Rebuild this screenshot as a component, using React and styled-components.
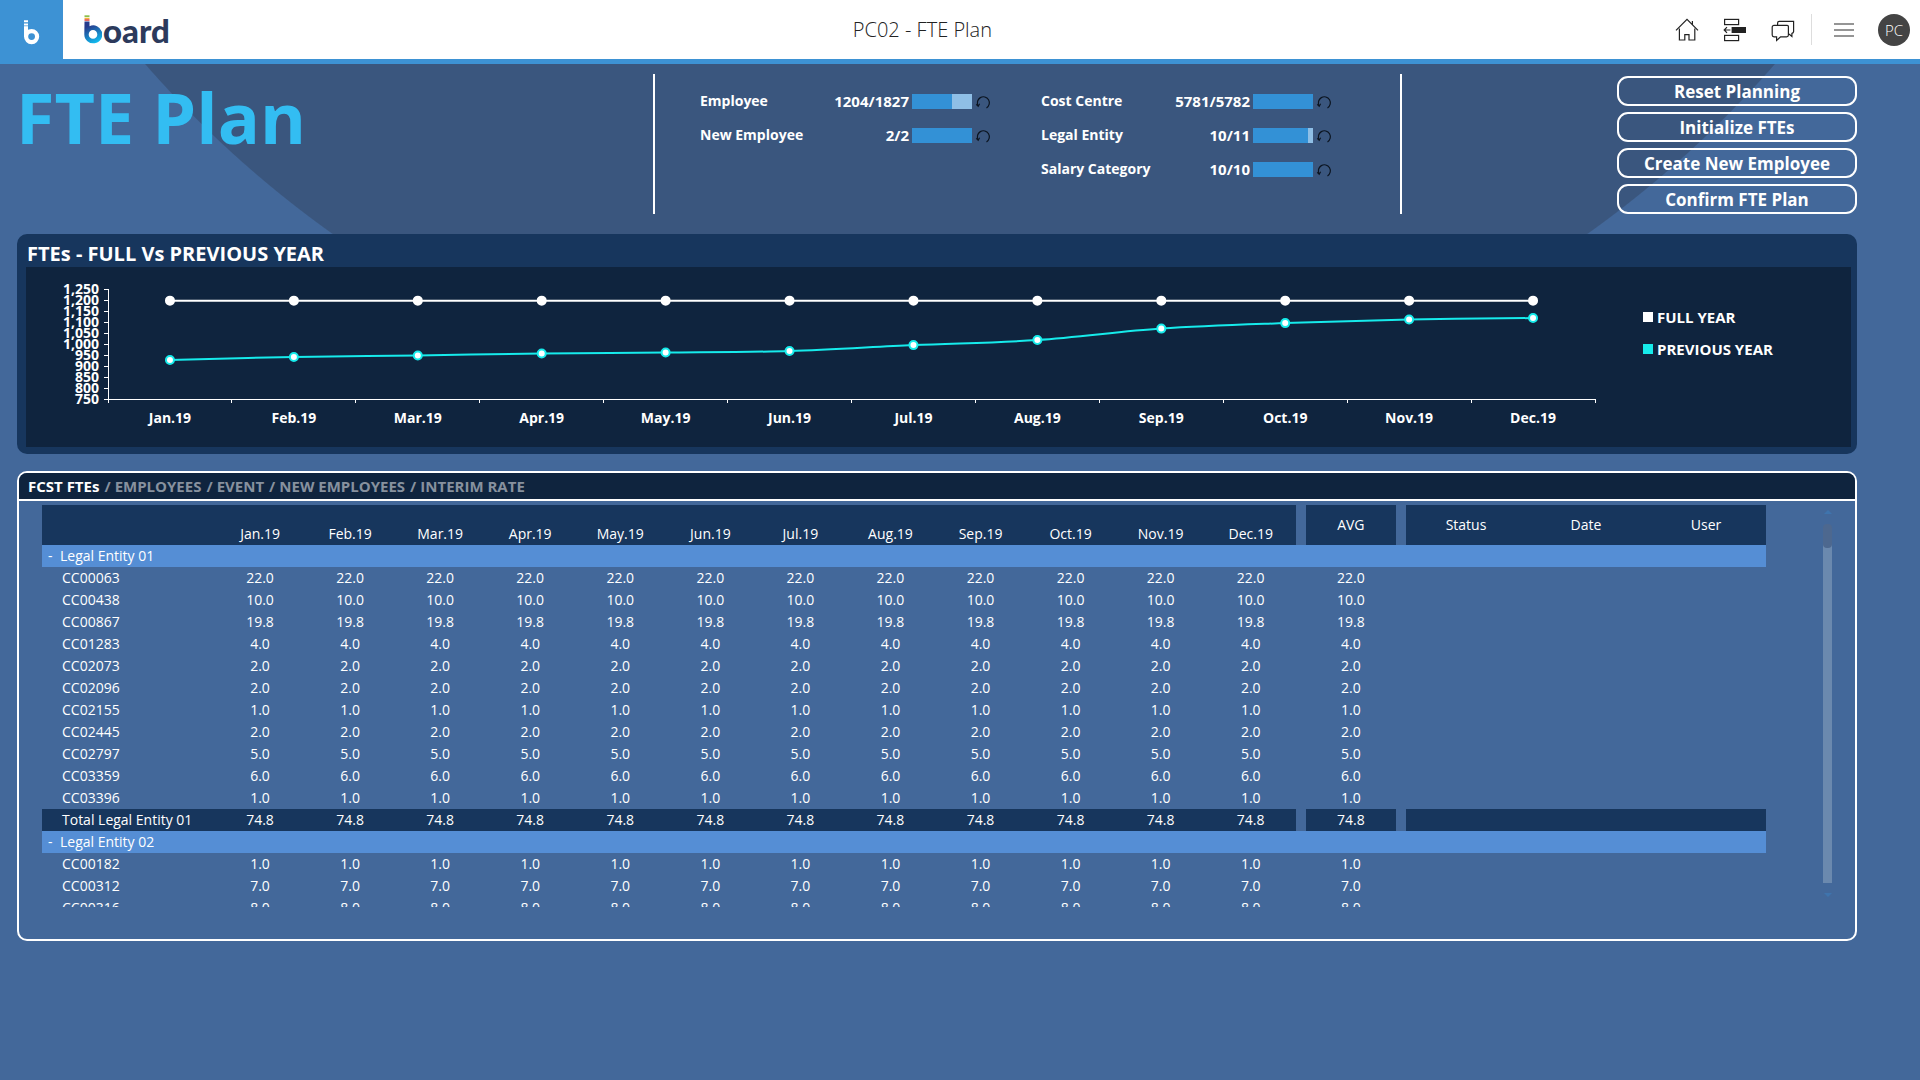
// src/pages/FtePlan.jsx
import React, { useState } from "react";
import styled, { createGlobalStyle } from "styled-components";

/* ────── DATA ────── */
const MONTHS = [
  "Jan.19", "Feb.19", "Mar.19", "Apr.19", "May.19", "Jun.19",
  "Jul.19", "Aug.19", "Sep.19", "Oct.19", "Nov.19", "Dec.19",
];

const SELECTIONS = [
  [
    { label: "Employee", value: "1204/1827", share: 66 },
    { label: "New Employee", value: "2/2", share: 100 },
  ],
  [
    { label: "Cost Centre", value: "5781/5782", share: 100 },
    { label: "Legal Entity", value: "10/11", share: 91 },
    { label: "Salary Category", value: "10/10", share: 100 },
  ],
];

const ACTIONS = [
  "Reset Planning",
  "Initialize FTEs",
  "Create New Employee",
  "Confirm FTE Plan",
];

const TABS = ["FCST FTEs", "EMPLOYEES", "EVENT", "NEW EMPLOYEES", "INTERIM RATE"];

const FULL_YEAR = Array(12).fill(1197);
const PREVIOUS_YEAR = [927, 941, 948, 957, 961, 968, 995, 1018, 1070, 1095, 1111, 1118];

const ROWS = [
  { type: "group", label: "Legal Entity 01" },
  { label: "CC00063", value: "22.0" },
  { label: "CC00438", value: "10.0" },
  { label: "CC00867", value: "19.8" },
  { label: "CC01283", value: "4.0" },
  { label: "CC02073", value: "2.0" },
  { label: "CC02096", value: "2.0" },
  { label: "CC02155", value: "1.0" },
  { label: "CC02445", value: "2.0" },
  { label: "CC02797", value: "5.0" },
  { label: "CC03359", value: "6.0" },
  { label: "CC03396", value: "1.0" },
  { type: "total", label: "Total Legal Entity 01", value: "74.8" },
  { type: "group", label: "Legal Entity 02" },
  { label: "CC00182", value: "1.0" },
  { label: "CC00312", value: "7.0" },
  { label: "CC00316", value: "8.0" },
];

/* ────── GLOBAL ────── */
const GlobalStyle = createGlobalStyle`
  * {
    box-sizing: border-box;
  }

  body {
    margin: 0;
    background: #43689a;
    color: #fff;
    font-family: "Open Sans", "Noto Sans", sans-serif;
    font-size: 14px;
  }

  button {
    font-family: inherit;
    color: inherit;
    background: none;
    border: none;
    padding: 0;
    cursor: pointer;
  }
`;

/* ────── TOP BAR ────── */
const TopBar = styled.header`
  display: flex;
  height: 64px;
  background: #fff;
  border-bottom: 5px solid #3d92d4;
`;

const HomeTile = styled.a`
  display: flex;
  align-items: center;
  justify-content: center;
  width: 63px;
  height: 64px;
  background: #3d92d4;
`;

const Brand = styled.a`
  display: flex;
  align-items: center;
  gap: 1px;
  padding-left: 21px;
  color: #2c3a5c;
  font: 900 33px/40px Lato, sans-serif;
  text-decoration: none;
`;

const BarTitle = styled.h1`
  flex: 1;
  margin: 0;
  color: #222;
  font-size: 20px;
  font-weight: 300;
  line-height: 59px;
  text-align: center;
`;

const BarTools = styled.nav`
  display: flex;
  align-items: center;
  justify-content: flex-end;
  gap: 24px;
  padding-right: 10px;
`;

const ToolButton = styled.button`
  display: flex;
`;

const ToolDivider = styled.span`
  width: 1px;
  height: 31px;
  margin: 0 -2px 0 -8px;
  background: #ddd;
`;

const Avatar = styled.button`
  width: 32px;
  height: 32px;
  border-radius: 50%;
  background: #444;
  color: #fff;
  font-size: 15px;
  font-weight: 300;
`;

/* ────── PLAN HEADER ────── */
const PlanHeader = styled.section`
  display: flex;
  align-items: flex-start;
  height: 170px;
  padding: 10px 63px 0 16px;
  background: radial-gradient(
    circle at 50% -711px,
    #3a567e 1081px,
    transparent 1082px
  );
`;

const PlanTitle = styled.h2`
  flex: 7;
  margin: 0;
  color: #33bdf2;
  font-size: 70px;
  font-weight: 700;
  line-height: 86px;
`;

const Selections = styled.div`
  display: flex;
  gap: 50px;
  width: 749px;
  height: 140px;
  padding: 17px 0 0 45px;
  border: solid #fff;
  border-width: 0 2px;
`;

const SelectionColumn = styled.div`
  display: flex;
  flex-direction: column;
  gap: 14px;
  width: 291px;
`;

const SelectionRow = styled.div`
  display: flex;
  align-items: center;
  gap: 3px;
  font-weight: 700;
  line-height: 20px;
`;

const SelectionLabel = styled.span`
  flex: 1;
`;

const SelectionValue = styled.span`
  font-size: 15px;
`;

const ShareTrack = styled.span`
  width: 60px;
  height: 15px;
  background: #8fbfe6;
`;

const ShareFill = styled.span`
  display: block;
  height: 100%;
  background: #3391d6;
`;

const Actions = styled.div`
  flex: 5;
  display: flex;
  flex-direction: column;
  align-items: flex-end;
  gap: 6px;
  padding-top: 2px;
`;

const ActionButton = styled.button`
  width: 240px;
  height: 30px;
  padding-top: 1px;
  border: 2px solid #fff;
  border-radius: 11px;
  font-size: 17px;
  font-weight: 700;
  line-height: 25px;
`;

/* ────── CHART PANEL ────── */
const Content = styled.main`
  display: flex;
  flex-direction: column;
  gap: 17px;
  padding: 0 63px 40px 17px;
`;

const ChartPanel = styled.section`
  padding: 0 6px 7px 9px;
  border-radius: 10px;
  background: #17365d;
`;

const ChartTitle = styled.h3`
  margin: 0 1px;
  padding-top: 7px;
  font-size: 20px;
  font-weight: 700;
  line-height: 26px;
`;

const ChartArea = styled.div`
  display: flex;
  background: #0f243e;
`;

const Plot = styled.svg`
  flex: 1;
  min-width: 0;
  font-size: 14px;
  font-weight: 700;
`;

const Legend = styled.ul`
  display: flex;
  flex-direction: column;
  gap: 12px;
  width: 208px;
  margin: 0;
  padding: 40px 0 0;
  list-style: none;
  font-size: 15px;
  font-weight: 700;
  line-height: 20px;
`;

const LegendItem = styled.li`
  display: flex;
  align-items: center;
  gap: 4px;

  &::before {
    content: "";
    width: 10px;
    height: 10px;
    background: ${({ $color }) => $color};
  }
`;

/* ────── TABLE PANEL ────── */
const TablePanel = styled.section`
  border: 2px solid #fff;
  border-radius: 10px;
  overflow: hidden;
`;

const TabList = styled.div`
  display: flex;
  height: 28px;
  padding-left: 9px;
  border-bottom: 2px solid #fff;
  background: #0f243e;
`;

const Tab = styled.button`
  color: ${({ $active }) => ($active ? "#fff" : "#87919e")};
  font-size: 15px;
  font-weight: 700;
  line-height: 24px;

  &:not(:first-child)::before {
    content: "/";
    padding: 0 4px 0 5px;
    color: #87919e;
  }
`;

const TableBody = styled.div`
  display: flex;
  justify-content: space-between;
  padding: 4px 23px 32px;
`;

const TableViewport = styled.div`
  flex: 1;
  max-height: 402px;
  margin-right: 57px;
  overflow: hidden;
`;

const Table = styled.table`
  width: 100%;
  table-layout: fixed;
  border-collapse: collapse;
  line-height: 22px;
`;

const Col = styled.col`
  width: ${({ $width }) => ($width ? `${$width}px` : "auto")};
`;

const HeadCell = styled.th`
  height: 40px;
  padding: 0;
  background: #17365d;
  font-weight: 400;
  vertical-align: ${({ $align }) => $align || "middle"};
`;

const GapCell = styled.td`
  padding: 0;
`;

const GroupCell = styled.th`
  height: 22px;
  padding: 0 0 0 6px;
  background: #558ed5;
  font-weight: 400;
  text-align: left;
`;

const Toggle = styled.button`
  width: 12px;
  font-size: 14px;
  line-height: 20px;
  text-align: left;
`;

const LabelCell = styled.th`
  height: 22px;
  padding: 0 0 0 20px;
  background: ${({ $total }) => ($total ? "#17365d" : "none")};
  font-weight: 400;
  text-align: left;
  white-space: nowrap;
`;

const ValueCell = styled.td`
  padding: 0;
  background: ${({ $total }) => ($total ? "#17365d" : "none")};
  text-align: center;
`;

const ScrollRail = styled.div`
  display: flex;
  flex-direction: column;
  align-items: center;
  justify-content: space-between;
  width: 9px;
  padding: 5px 0 10px;
`;

const ScrollArrow = styled.span`
  border: 4px solid transparent;
  border-width: ${({ $down }) => ($down ? "4px 4px 0" : "0 4px 4px")};
  border-color: transparent transparent #3f74ad;
  border-top-color: ${({ $down }) => ($down ? "#3f74ad" : "transparent")};
`;

const ScrollTrack = styled.span`
  flex: 1;
  width: 9px;
  margin: 10px 0;
  background: linear-gradient(transparent 12px, #6b89ae 12px);
`;

const ScrollThumb = styled.span`
  display: block;
  height: 24px;
  border-radius: 4px;
  background: #4d688f;
`;

/* ────── ICONS ────── */
const WhiteMark = () => (
  <svg width="16" height="25" viewBox="0 0 16 25" fill="none">
    <path d="M0 1.2H4M0 4.4H4" stroke="#fff" strokeWidth="2" />
    <path d="M2 6.2V17" stroke="#fff" strokeWidth="4" />
    <circle cx="7.6" cy="16.6" r="5.5" stroke="#fff" strokeWidth="4.2" />
  </svg>
);

const ColorMark = () => (
  <svg width="18" height="29" viewBox="0 0 18 29" fill="none">
    <defs>
      <linearGradient id="mark" x1="2" y1="7" x2="12" y2="28" gradientUnits="userSpaceOnUse">
        <stop offset="0.2" stopColor="#263a8c" />
        <stop offset="1" stopColor="#10bdf0" />
      </linearGradient>
    </defs>
    <path d="M0.5 1.2H5.5" stroke="#8cc04b" strokeWidth="1.8" />
    <path d="M0.5 3.4H5.5" stroke="#f3b63a" strokeWidth="1.2" />
    <path d="M0.5 5H5.5" stroke="#e2483d" strokeWidth="1.6" />
    <path
      d="M0.5 6.6H5.5V11.2A9 9 0 1 1 0.3 19.4ZM9 15.1A4.3 4.3 0 1 0 9 23.7A4.3 4.3 0 1 0 9 15.1Z"
      fill="url(#mark)"
      fillRule="evenodd"
    />
  </svg>
);

const HomeIcon = () => (
  <svg width="24" height="24" viewBox="0 0 24 24" fill="none" stroke="#222" strokeWidth="1.2">
    <path d="M1 12.4L12 1.4L23 12.4M17.4 6.6V3" />
    <path d="M4.4 10.5V22H9.8V16.6H14V22H19.8V10.5" />
  </svg>
);

const LayoutIcon = () => (
  <svg width="24" height="24" viewBox="0 0 24 24" fill="none" stroke="#222" strokeWidth="1.2">
    <rect x="1.6" y="1.4" width="14" height="5.2" />
    <rect x="1.6" y="17.4" width="14" height="5.2" />
    <rect x="8.6" y="9" width="14.4" height="6" fill="#222" stroke="none" />
    <path d="M7.4 12H1.4M4 9.2L1.2 12L4 14.8" />
  </svg>
);

const ChatIcon = () => (
  <svg width="24" height="24" viewBox="0 0 24 24" fill="none" stroke="#222" strokeWidth="1.2">
    <path d="M6.6 7V5A1.6 1.6 0 0 1 8.2 3.4H22.6V13.6A2 2 0 0 1 20.9 15.4V18.4L18 16" />
    <path d="M3 7.4H16.2A1.2 1.2 0 0 1 17.4 8.6V17A1.8 1.8 0 0 1 15.6 18.8H9.6L5.6 22.4V18.8H3A1.8 1.8 0 0 1 1.2 17V9.2A1.8 1.8 0 0 1 3 7.4Z" />
  </svg>
);

const MenuIcon = () => (
  <svg width="20" height="16" viewBox="0 0 20 16" stroke="#959595" strokeWidth="1.8">
    <path d="M0 2H20M0 8H20M0 14H20" />
  </svg>
);

const ResetIcon = () => (
  <svg width="16" height="16" viewBox="0 0 16 16" fill="none" stroke="#0b1420" strokeWidth="1.2">
    <path d="M11.5 14.9A6 6 0 1 0 3.2 12.8" />
    <path d="M1.2 11.4L3.2 13.2L4.6 10.8" />
  </svg>
);

/* ────── CHART ────── */
const AXIS = { left: 82, right: 1569, top: 22, bottom: 132 };
const STEP = (AXIS.right - AXIS.left) / 12;

const toPoint = (value, i) => [
  AXIS.left + STEP * (i + 0.5),
  AXIS.top + ((1250 - value) / 500) * (AXIS.bottom - AXIS.top),
];

// cubic segments with the tangents taken from the neighbouring points
const smoothPath = (points) =>
  points.slice(1).reduce((d, [x, y], i) => {
    const [px, py] = points[i];
    const before = points[i - 1] || points[i];
    const after = points[i + 2] || points[i + 1];
    const c1 = [px + (x - before[0]) / 6, py + (y - before[1]) / 6];
    const c2 = [x - (after[0] - px) / 6, y - (after[1] - py) / 6];
    return `${d}C${c1} ${c2} ${x},${y}`;
  }, `M${points[0]}`);

const Series = ({ values, color }) => {
  const points = values.map(toPoint);
  return (
    <g stroke={color} strokeWidth="2" fill="#fff">
      <path d={smoothPath(points)} fill="none" />
      {points.map(([x, y]) => (
        <circle key={x} cx={x} cy={y} r="4" />
      ))}
    </g>
  );
};

const FteChart = () => (
  <Plot viewBox="0 0 1617 180" role="img" aria-label="FTEs full year against previous year">
    <g stroke="#fff" strokeWidth="1" shapeRendering="crispEdges">
      <path d={`M${AXIS.left} ${AXIS.top}V${AXIS.bottom}H${AXIS.right}`} fill="none" />
      {Array.from({ length: 11 }, (_, i) => (
        <path key={i} d={`M${AXIS.left - 4} ${AXIS.top + i * 11}h4`} />
      ))}
      {Array.from({ length: 13 }, (_, i) => (
        <path key={i} d={`M${AXIS.left + i * STEP} ${AXIS.bottom}v4`} />
      ))}
    </g>
    <g fill="#fff" textAnchor="end">
      {Array.from({ length: 11 }, (_, i) => (
        <text key={i} x="73" y={AXIS.top + i * 11 + 5}>
          {(1250 - i * 50).toLocaleString("en-US")}
        </text>
      ))}
    </g>
    <g fill="#fff" textAnchor="middle">
      {MONTHS.map((month, i) => (
        <text key={month} x={AXIS.left + STEP * (i + 0.5)} y="156">
          {month}
        </text>
      ))}
    </g>
    <Series values={FULL_YEAR} color="#fff" />
    <Series values={PREVIOUS_YEAR} color="#16ebeb" />
  </Plot>
);

/* ────── TABLE ────── */
const PlanRow = ({ type, label, value }) => {
  if (type === "group") {
    return (
      <tr>
        <GroupCell colSpan={19} scope="rowgroup">
          <Toggle aria-label={`Collapse ${label}`}>-</Toggle>
          {label}
        </GroupCell>
      </tr>
    );
  }

  const total = type === "total";
  return (
    <tr>
      <LabelCell scope="row" $total={total}>{label}</LabelCell>
      {MONTHS.map((month) => (
        <ValueCell key={month} $total={total}>{value}</ValueCell>
      ))}
      <GapCell />
      <ValueCell $total={total}>{value}</ValueCell>
      <GapCell />
      <ValueCell colSpan={3} $total={total} />
    </tr>
  );
};

const PlanTable = () => (
  <Table>
    <colgroup>
      <Col $width={173} />
      {MONTHS.map((month) => (
        <Col key={month} />
      ))}
      <Col $width={10} />
      <Col />
      <Col $width={10} />
      <Col $width={120} />
      <Col $width={120} />
      <Col $width={120} />
    </colgroup>
    <thead>
      <tr>
        <HeadCell />
        {MONTHS.map((month) => (
          <HeadCell key={month} scope="col" $align="bottom">{month}</HeadCell>
        ))}
        <GapCell />
        <HeadCell scope="col">AVG</HeadCell>
        <GapCell />
        <HeadCell scope="col">Status</HeadCell>
        <HeadCell scope="col">Date</HeadCell>
        <HeadCell scope="col">User</HeadCell>
      </tr>
    </thead>
    <tbody>
      {ROWS.map((row) => (
        <PlanRow key={row.label} {...row} />
      ))}
    </tbody>
  </Table>
);

/* ────── PAGE ────── */
export default function App() {
  const [tab, setTab] = useState(TABS[0]);

  return (
    <>
      <GlobalStyle />
      <TopBar>
        <HomeTile href="#" aria-label="Start">
          <WhiteMark />
        </HomeTile>
        <Brand href="#">
          <ColorMark />
          oard
        </Brand>
        <BarTitle>PC02 - FTE Plan</BarTitle>
        <BarTools>
          <ToolButton aria-label="Home"><HomeIcon /></ToolButton>
          <ToolButton aria-label="Layout"><LayoutIcon /></ToolButton>
          <ToolButton aria-label="Messages"><ChatIcon /></ToolButton>
          <ToolDivider />
          <ToolButton aria-label="Menu"><MenuIcon /></ToolButton>
          <Avatar>PC</Avatar>
        </BarTools>
      </TopBar>

      <PlanHeader>
        <PlanTitle>FTE Plan</PlanTitle>
        <Selections>
          {SELECTIONS.map((column, i) => (
            <SelectionColumn key={i}>
              {column.map(({ label, value, share }) => (
                <SelectionRow key={label}>
                  <SelectionLabel>{label}</SelectionLabel>
                  <SelectionValue>{value}</SelectionValue>
                  <ShareTrack>
                    <ShareFill style={{ width: `${share}%` }} />
                  </ShareTrack>
                  <ToolButton aria-label={`Reset ${label}`}><ResetIcon /></ToolButton>
                </SelectionRow>
              ))}
            </SelectionColumn>
          ))}
        </Selections>
        <Actions>
          {ACTIONS.map((action) => (
            <ActionButton key={action}>{action}</ActionButton>
          ))}
        </Actions>
      </PlanHeader>

      <Content>
        <ChartPanel>
          <ChartTitle>FTEs - FULL Vs PREVIOUS YEAR</ChartTitle>
          <ChartArea>
            <FteChart />
            <Legend>
              <LegendItem $color="#fff">FULL YEAR</LegendItem>
              <LegendItem $color="#16ebeb">PREVIOUS YEAR</LegendItem>
            </Legend>
          </ChartArea>
        </ChartPanel>

        <TablePanel>
          <TabList role="tablist">
            {TABS.map((name) => (
              <Tab
                key={name}
                role="tab"
                aria-selected={name === tab}
                $active={name === tab}
                onClick={() => setTab(name)}
              >
                {name}
              </Tab>
            ))}
          </TabList>
          <TableBody>
            <TableViewport>
              <PlanTable />
            </TableViewport>
            <ScrollRail>
              <ScrollArrow />
              <ScrollTrack>
                <ScrollThumb />
              </ScrollTrack>
              <ScrollArrow $down />
            </ScrollRail>
          </TableBody>
        </TablePanel>
      </Content>
    </>
  );
}
